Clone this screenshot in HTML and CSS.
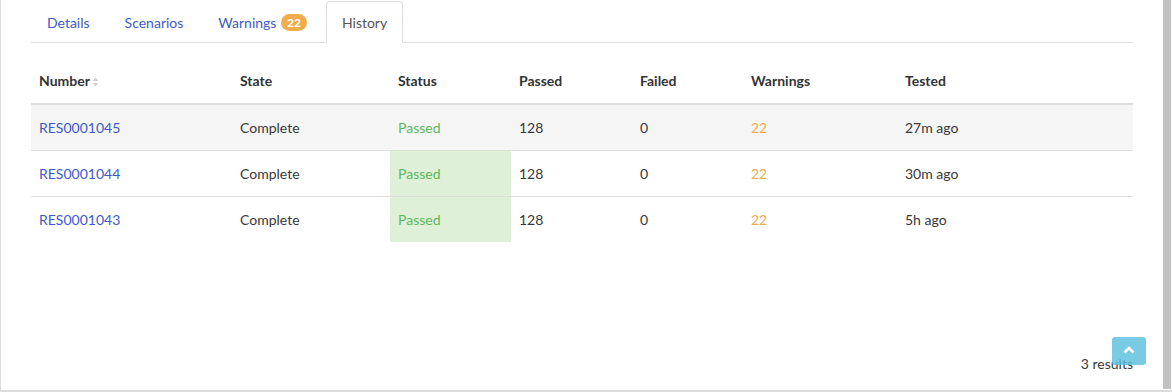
FILE: index.html
```html
<!DOCTYPE html>
<html>
<head>
<meta charset="utf-8">
<link rel="stylesheet" href="styles.css">
</head>
<body>
<div class="frame">
  <div class="content">
    <ul class="tabs">
      <li class="tab"><a href="#">Details</a></li>
      <li class="tab"><a href="#">Scenarios</a></li>
      <li class="tab"><a href="#">Warnings <span class="badge">22</span></a></li>
      <li class="tab active"><a href="#">History</a></li>
    </ul>
    <table class="results">
      <thead>
        <tr>
          <th class="c-num">Number<svg class="sort" width="7" height="10" viewBox="0 0 7 10"><path d="M3.5 0.5L6.5 4H0.5Z M3.5 9.5L6.5 6H0.5Z" fill="#cfcfcf"/></svg></th>
          <th class="c-state">State</th>
          <th class="c-status">Status</th>
          <th class="c-passed">Passed</th>
          <th class="c-failed">Failed</th>
          <th class="c-warn">Warnings</th>
          <th class="c-tested">Tested</th>
        </tr>
      </thead>
      <tbody>
        <tr class="hover">
          <td><a href="#">RES0001045</a></td>
          <td>Complete</td>
          <td class="ok">Passed</td>
          <td>128</td>
          <td>0</td>
          <td class="warn">22</td>
          <td>27m ago</td>
        </tr>
        <tr>
          <td><a href="#">RES0001044</a></td>
          <td>Complete</td>
          <td class="ok ok-bg">Passed</td>
          <td>128</td>
          <td>0</td>
          <td class="warn">22</td>
          <td>30m ago</td>
        </tr>
        <tr>
          <td><a href="#">RES0001043</a></td>
          <td>Complete</td>
          <td class="ok ok-bg">Passed</td>
          <td>128</td>
          <td>0</td>
          <td class="warn">22</td>
          <td>5h ago</td>
        </tr>
      </tbody>
    </table>
    <div class="count">3 results</div>
  </div>
  <div class="scrollbar"></div>
  <a class="to-top" href="#"><svg width="12" height="8" viewBox="0 0 12 8"><path d="M1.5 6.5L6 2L10.5 6.5" fill="none" stroke="#fff" stroke-width="2.6"/></svg></a>
</div>
</body>
</html>
```
FILE: styles.css
```css
* { box-sizing: border-box; }
html, body { margin: 0; padding: 0; background: #fff; }
body {
  font-family: Lato, "Open Sans", sans-serif;
  font-size: 14px;
  line-height: 20px;
  color: #383838;
}
a { color: #3d5ac8; text-decoration: none; }

.frame {
  position: relative;
  display: flex;
  width: 1172px;
  height: 392px;
  border-left: 1px solid #dcdcdc;
  border-bottom: 2px solid #dcdcdc;
}
.content {
  flex: 1;
  display: flex;
  flex-direction: column;
  padding: 1px 30px 16px 30px;
}
.scrollbar {
  width: 8px;
  height: 389px;
  margin-right: 1px;
  background: #c1c1c1;
}

.tabs {
  list-style: none;
  margin: 0;
  padding: 0;
  display: flex;
  border-bottom: 1px solid #dddddd;
}
.tab { margin-right: 3px; margin-bottom: -1px; }
.tab a {
  display: block;
  padding: 11px 15px 9px;
  border: 1px solid transparent;
  border-radius: 4px 4px 0 0;
  line-height: 20px;
}
.tab.active a {
  color: #555;
  background: #fff;
  border-color: #dddddd #dddddd transparent;
}
.badge {
  display: inline-block;
  min-width: 25px;
  padding: 0 6px;
  margin-left: 1px;
  border-radius: 9px;
  background: #f0ad4e;
  color: #fff;
  font-size: 12px;
  font-weight: 700;
  line-height: 17px;
  text-align: center;
  vertical-align: 1px;
}

.results {
  margin-top: 15px;
  width: 1102px;
  border-collapse: collapse;
  table-layout: fixed;
}
.results th, .results td {
  padding: 12px 8px;
  line-height: 21px;
  text-align: left;
  vertical-align: middle;
}
.results th {
  font-weight: 700;
  color: #333;
  border-bottom: 2px solid #dddddd;
}
.results tbody tr + tr td { border-top: 1px solid #dddddd; }
.results tr.hover td { background: #f5f5f5; }
.c-num { width: 201px; }
.c-state { width: 158px; }
.c-status { width: 121px; }
.c-passed { width: 121px; }
.c-failed { width: 111px; }
.c-warn { width: 154px; }
.c-tested { width: 236px; }
.sort { margin-left: 2px; vertical-align: -1px; }
.ok { color: #5cb85c; }
.results td.ok-bg { background: #dff0d8; }
.warn { color: #f0ad4e; }

.count {
  margin-top: auto;
  text-align: right;
  line-height: 20px;
}

.to-top {
  position: absolute;
  left: 1111px;
  top: 337px;
  width: 34px;
  height: 28px;
  border-radius: 3px;
  background: rgba(91, 192, 222, 0.82);
  display: flex;
  align-items: center;
  justify-content: center;
}
.to-top svg { margin-top: -2px; }
```
